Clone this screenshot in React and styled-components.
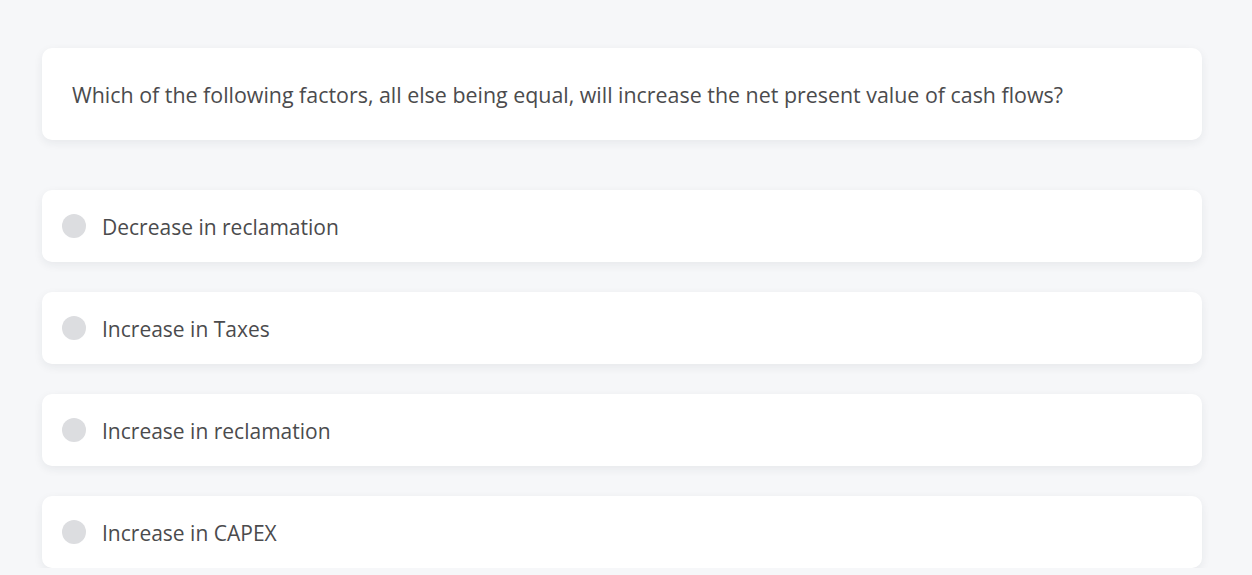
import React from "react"
import styled, { createGlobalStyle } from "styled-components"

const GlobalStyle = createGlobalStyle`
  html, body {
    margin: 0;
    padding: 0;
    background: #f6f7f9;
    font-family: "Open Sans", "Noto Sans", sans-serif;
    color: #4b4b4d;
  }
`

const Page = styled.div`
  padding: 48px 0 0 42px;
`

const Quiz = styled.div`
  width: 1160px;
  display: flex;
  flex-direction: column;
`

const Card = styled.div`
  background: #ffffff;
  border-radius: 10px;
  box-shadow: 0 3px 10px rgba(30, 40, 60, 0.07);
`

const QuestionCard = styled(Card)`
  height: 92px;
  box-sizing: border-box;
  padding: 0 30px;
  display: flex;
  align-items: center;
  font-size: 21.4px;
  margin-bottom: 50px;
`

const Options = styled.div`
  display: flex;
  flex-direction: column;
  gap: 30px;
`

const Option = styled(Card)`
  height: 72px;
  box-sizing: border-box;
  padding: 0 20px;
  display: flex;
  align-items: center;
  gap: 16px;
  font-size: 21px;
  cursor: pointer;
`

const Label = styled.span`
  padding-top: 2px;
`

const Radio = styled.span`
  width: 24px;
  height: 24px;
  border-radius: 50%;
  background: ${({ checked }) => (checked ? "#4a7cf0" : "#dcdde0")};
  flex: 0 0 auto;
`

const answers = [
  "Decrease in reclamation",
  "Increase in Taxes",
  "Increase in reclamation",
  "Increase in CAPEX",
]

export default function App() {
  return (
    <>
      <GlobalStyle />
      <Page>
        <Quiz>
          <QuestionCard>
            Which of the following factors, all else being equal, will increase the net present value of cash flows?
          </QuestionCard>
          <Options>
            {answers.map((a) => (
              <Option key={a}>
                <Radio />
                <Label>{a}</Label>
              </Option>
            ))}
          </Options>
        </Quiz>
      </Page>
    </>
  )
}
